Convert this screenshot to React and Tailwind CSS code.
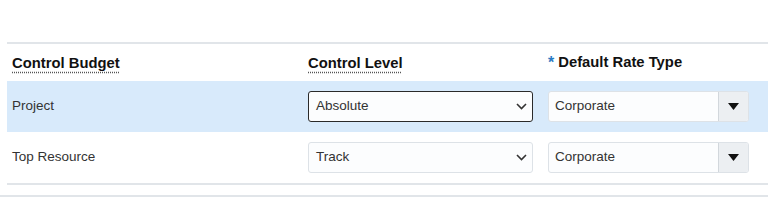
import React from "react";

const font = { fontFamily: '"Liberation Sans", Arial, sans-serif' };

function Chevron() {
  return (
    <svg width="11" height="7" viewBox="0 0 11 7" className="shrink-0">
      <path d="M1 1 L5.5 5.5 L10 1" fill="none" stroke="#333" strokeWidth="1.6" />
    </svg>
  );
}

function NativeSelect({ value, active }) {
  return (
    <div
      className={
        "flex h-[31px] w-[225px] items-center justify-between rounded-[3px] pl-[7px] pr-[5px] bg-[#fcfdfe] " +
        (active ? "border-[1.5px] border-[#2a2a2a]" : "border border-[#dde2e7]")
      }
    >
      <span className="text-[13.5px] text-[#333]">{value}</span>
      <Chevron />
    </div>
  );
}

function ComboSelect({ value }) {
  return (
    <div className="flex h-[31px] w-[201px] rounded-[3px] border border-[#dde2e7] bg-[#fcfdfe] overflow-hidden">
      <div className="flex flex-1 items-center pl-[6px] text-[13.5px] text-[#333]">{value}</div>
      <div className="flex w-[30px] items-center justify-center border-l border-[#d2d7dc] bg-[#eceff2]">
        <svg width="11" height="7" viewBox="0 0 11 7">
          <path d="M0 0 L11 0 L5.5 7 Z" fill="#111" />
        </svg>
      </div>
    </div>
  );
}

function HeaderCell({ children }) {
  return (
    <span className="text-[14.8px] font-bold text-[#111] underline decoration-dotted decoration-[#555] underline-offset-[4px]">
      {children}
    </span>
  );
}

export default function App() {
  const rows = [
    { name: "Project", level: "Absolute", rate: "Corporate", selected: true },
    { name: "Top Resource", level: "Track", rate: "Corporate", selected: false },
  ];
  return (
    <div className="h-[213px] w-[768px] bg-white overflow-hidden" style={font}>
      <div className="h-[42px]" />
      <div className="ml-[7px] border-t-2 border-[#e1e5e9]">
        <div className="grid h-[37px] grid-cols-[296px_240px_1fr] items-center">
          <div className="pl-[5px]">
            <HeaderCell>Control Budget</HeaderCell>
          </div>
          <div className="pl-[5px]">
            <HeaderCell>Control Level</HeaderCell>
          </div>
          <div className="pl-[5px] flex items-center">
            <span className="mr-[4px] text-[16px] font-bold text-[#2b7bc4]">*</span>
            <span className="text-[14.8px] font-bold text-[#111]">Default Rate Type</span>
          </div>
        </div>
        {rows.map((r) => (
          <div
            key={r.name}
            className={
              "grid h-[51px] grid-cols-[296px_240px_1fr] items-center " +
              (r.selected ? "bg-[#d8eafb]" : "bg-white")
            }
          >
            <div className="pl-[5px] text-[13.5px] text-[#333]">{r.name}</div>
            <div className="pl-[5px]">
              <NativeSelect value={r.level} active={r.selected} />
            </div>
            <div className="pl-[5px]">
              <ComboSelect value={r.rate} />
            </div>
          </div>
        ))}
        <div className="h-[2px] bg-[#e1e5e9]" />
      </div>
      <div className="mt-[10px] h-[2px] bg-[#e1e5e9]" />
    </div>
  );
}
